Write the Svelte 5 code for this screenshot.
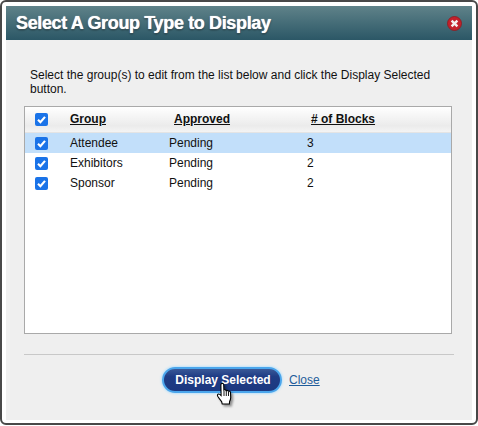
<script lang="ts">
  const rows = [
    { group: "Attendee", approved: "Pending", blocks: 3, active: true },
    { group: "Exhibitors", approved: "Pending", blocks: 2, active: false },
    { group: "Sponsor", approved: "Pending", blocks: 2, active: false },
  ];
</script>

{#snippet check()}
  <span class="check">
    <svg width="13" height="13" viewBox="0 0 13 13">
      <path d="M3 6.8 L5.4 9.2 L10 3.9" fill="none" stroke="#fff" stroke-width="2.2" />
    </svg>
  </span>
{/snippet}

<div class="modal">
  <div class="inner">
    <header>
      <h1>Select A Group Type to Display</h1>
      <span class="close-x">
        <svg width="15" height="15" viewBox="0 0 15 15">
          <circle cx="7.5" cy="7.5" r="7" fill="#c3202b" stroke="#8e1a20" stroke-width="0.8" />
          <path d="M4.6 4.6 L10.4 10.4 M10.4 4.6 L4.6 10.4" stroke="#f4eded" stroke-width="2.4" />
        </svg>
      </span>
    </header>
    <div class="body">
      <p>Select the group(s) to edit from the list below and click the Display Selected button.</p>
      <div class="list">
        <div class="row head">
          <div class="c0">{@render check()}</div>
          <div class="c1">Group</div>
          <div class="c2">Approved</div>
          <div class="c3">
            # of Blocks
          </div>
        </div>
        {#each rows as row}
          <div class="row" class:active={row.active}>
            <div class="c0">{@render check()}</div>
            <div class="c1">{row.group}</div>
            <div class="c2">{row.approved}</div>
            <div class="c3">{row.blocks}</div>
          </div>
        {/each}
      </div>
      <hr />
      <div class="actions">
        <button>
          <span class="label">Display Selected</span>
          <svg class="hand" width="18" height="26" viewBox="0 0 18 26">
            <path
              d="M5.5 1.6 C6.6 1 7.6 1.6 7.7 2.8 L7.9 8.2 C8.6 7.6 9.8 7.7 10.2 8.6 C11 8.1 12.1 8.4 12.4 9.3 C13.3 8.9 14.4 9.4 14.5 10.6 L14.7 15.5 C14.7 17 14.2 18.3 13.6 19.4 L13.4 22 L6.2 22 L5.6 19.6 C4.2 17.8 2.8 16 1.7 14.2 C1.1 13.1 1.6 12.1 2.6 12 C3.5 11.9 4.3 12.7 5.1 13.5 L4.9 3 C4.9 2.4 5.1 1.9 5.5 1.6 Z"
              fill="#fff"
              stroke="#000"
              stroke-width="1.1"
            />
            <path d="M8 9 V14 M10.3 9 V14 M12.5 10 V14" stroke="#000" stroke-width="0.9" fill="none" />
          </svg>
        </button>
        <a href="#close">Close</a>
      </div>
    </div>
  </div>
</div>

<style>
  :global(body) {
    background: #fff;
  }

  .modal {
    width: 478px;
    height: 425px;
    box-sizing: border-box;
    border: 2px solid #484848;
    border-radius: 6px;
    background: #fff;
    padding: 4px 4px 3px;
    font-family: "Liberation Sans", Arial, sans-serif;
  }

  .inner {
    height: 100%;
    display: flex;
    flex-direction: column;
    background: #efefef;
  }

  header {
    height: 34px;
    flex: none;
    display: flex;
    align-items: center;
    justify-content: space-between;
    padding: 0 10px;
    background: linear-gradient(#5f8289, #2b5766);
  }

  h1 {
    margin: 0;
    font-size: 18px;
    letter-spacing: -0.36px;
    font-weight: bold;
    color: #fff;
    text-shadow: 0 0 1px #fff, 0 1px 2px rgba(0, 0, 0, 0.6);
  }

  .close-x {
    display: flex;
    margin-top: 1px;
  }

  .body {
    flex: 1;
    padding: 28px 18px 0;
    display: flex;
    flex-direction: column;
    font-size: 12px;
    color: #111;
  }

  p {
    margin: 0;
    padding-left: 6px;
    line-height: 14px;
  }

  .list {
    box-sizing: border-box;
    width: 428px;
    height: 228px;
    margin-top: 10px;
    border: 1px solid #a9a9a9;
    background: #fff;
  }

  .row {
    display: flex;
    align-items: center;
    height: 20px;
    line-height: 18px;
  }

  .row.head {
    height: 25px;
    line-height: 25px;
    background: linear-gradient(#fff, #ebebeb 75%, #f4f4f4);
    border-bottom: 1px solid #e4e4e4;
    font-weight: bold;
    text-decoration: underline;
  }

  .row.active {
    background: #c2dffa;
  }

  .c0 {
    width: 45px;
    padding-left: 10px;
    box-sizing: border-box;
    display: flex;
  }

  .c1 {
    width: 99px;
  }

  .c2 {
    width: 138px;
  }

  .head .c2 {
    padding-left: 5px;
    box-sizing: border-box;
    width: 142px;
  }

  .check {
    width: 13px;
    height: 13px;
    border-radius: 2px;
    background: #1a73e8;
    display: flex;
  }

  hr {
    height: 1px;
    box-sizing: border-box;
    margin: 20px 0 0;
    border: 0;
    background: #c8c8c8;
    width: 430px;
  }

  .actions {
    margin-top: 12px;
    display: flex;
    align-items: center;
    padding-left: 138px;
    gap: 7px;
  }

  button {
    position: relative;
    width: 120px;
    height: 26px;
    padding: 0;
    border: 2px solid #4ba6ec;
    border-radius: 13px;
    background: linear-gradient(#3a5897, #1f3c85 35%, #1c3880);
    box-shadow: 0 0 2px 1px #bfe3fa;
    color: #fff;
    font: bold 12px "Liberation Sans", Arial, sans-serif;
  }

  .label {
    position: relative;
    left: 1px;
  }

  .hand {
    position: absolute;
    left: 52px;
    top: 13px;
    filter: drop-shadow(2px 2px 1px rgba(0, 0, 0, 0.4));
  }

  a {
    color: #1e5c9a;
    font-size: 12px;
  }
</style>
